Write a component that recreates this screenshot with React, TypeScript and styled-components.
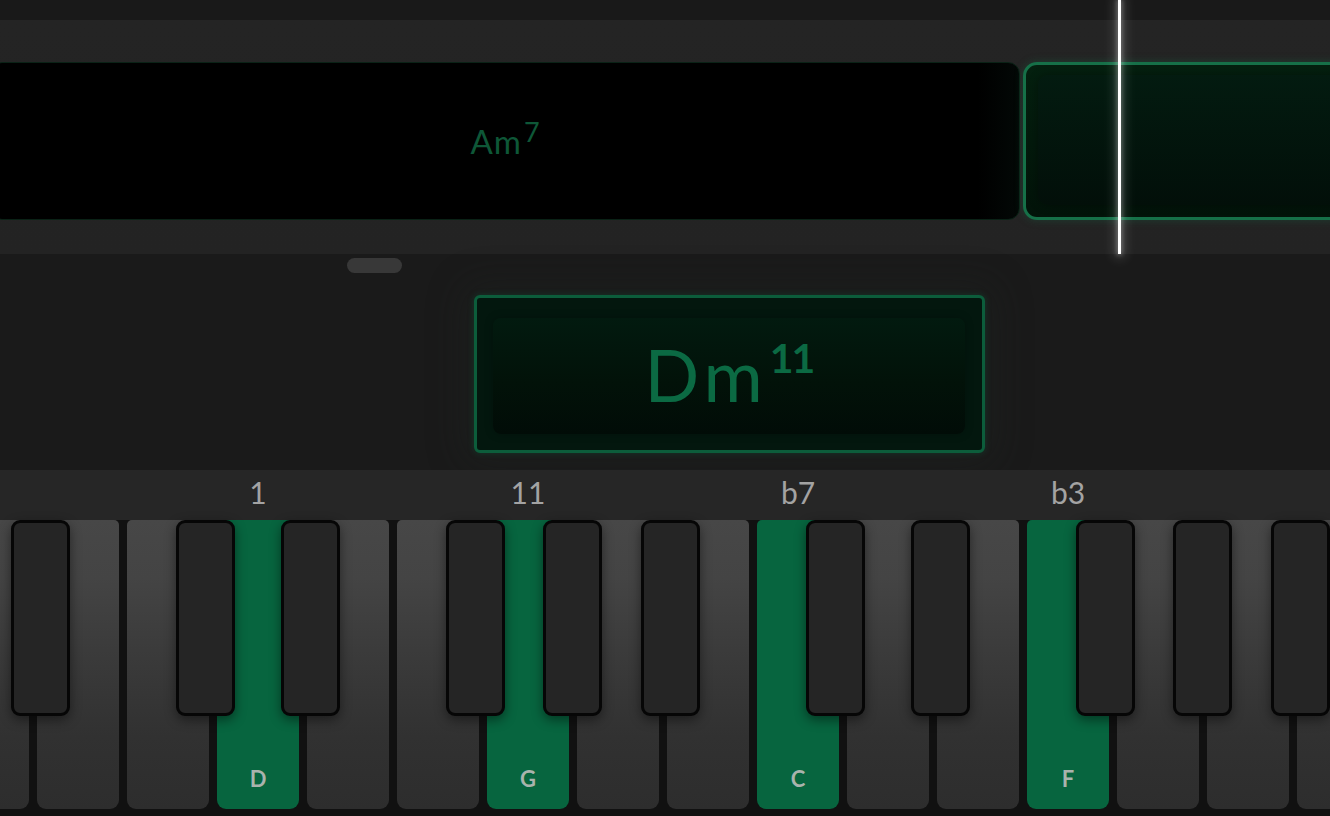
import React from "react";
import styled, { createGlobalStyle } from "styled-components";

const Global = createGlobalStyle`
  html, body { margin: 0; padding: 0; background: #1a1a1a; overflow: hidden; }
  * { box-sizing: border-box; }
`;

const FONT = `"Lato", "Noto Sans", "Liberation Sans", sans-serif`;

const Page = styled.div`
  position: relative;
  width: 1330px;
  height: 816px;
  overflow: hidden;
  display: flex;
  flex-direction: column;
  font-family: ${FONT};
`;

const TopStrip = styled.div`
  flex: 0 0 20px;
  background: #191919;
`;

const Lane = styled.div`
  flex: 0 0 234px;
  background: linear-gradient(180deg, #242424 0%, #232323 100%);
  display: flex;
  align-items: flex-start;
  gap: 3px;
  padding-top: 42px;
`;

const ChordBlock = styled.div<{ $active?: boolean; $width: number; $offset?: number }>`
  flex: 0 0 ${(p) => p.$width}px;
  margin-left: ${(p) => p.$offset ?? 0}px;
  height: 158px;
  border-radius: ${(p) => (p.$active ? 14 : 12)}px;
  border: ${(p) => (p.$active ? "3px solid #167048" : "1px solid #0a2216")};
  background: ${(p) =>
    p.$active
      ? "linear-gradient(180deg, #04200f 0%, #021309 100%)"
      : "linear-gradient(90deg, #000 0%, #000 96%, #030806 100%)"};
  box-shadow: ${(p) => (p.$active ? "0 0 8px rgba(22,112,72,0.35)" : "none")};
  display: flex;
  align-items: stretch;
  padding: ${(p) => (p.$active ? "10px 12px 12px 12px" : "0")};
`;

const ChordInner = styled.div`
  flex: 1;
  border-radius: 10px;
  background: linear-gradient(180deg, #031b10 0%, #020f09 100%);
  box-shadow: 0 0 10px rgba(0, 0, 0, 0.35);
`;

const ChordName = styled.div<{ $size: number; $color: string; $spacing?: number }>`
  flex: 1;
  display: flex;
  align-items: center;
  justify-content: center;
  color: ${(p) => p.$color};
  font-size: ${(p) => p.$size}px;
  letter-spacing: ${(p) => p.$spacing ?? 0}px;
  font-weight: 400;
  line-height: 1;
`;

const Root = styled.span``;

const Sup = styled.span<{ $size: number; $lift: number; $spacing?: number; $weight?: number }>`
  display: inline-block;
  font-size: ${(p) => p.$size}px;
  font-weight: ${(p) => p.$weight ?? 700};
  position: relative;
  top: -${(p) => p.$lift}px;
  letter-spacing: ${(p) => p.$spacing ?? 0}px;
  margin-left: 2px;
`;

const Playhead = styled.div`
  position: absolute;
  left: 1118px;
  top: 0;
  width: 3px;
  height: 254px;
  background: #ffffff;
  box-shadow: 0 0 5px 1px rgba(255, 255, 255, 0.35), 0 0 12px 5px rgba(255, 255, 255, 0.12);
`;

const Panel = styled.div`
  flex: 0 0 216px;
  background: #1a1a1a;
  display: flex;
  flex-direction: column;
  align-items: flex-start;
`;

const Handle = styled.div`
  margin: 4px 0 0 347px;
  width: 55px;
  height: 15px;
  border-radius: 8px;
  background: #383838;
`;

const Display = styled.div`
  margin: 22px 0 0 474px;
  width: 511px;
  height: 158px;
  border: 3px solid #0c5d3b;
  border-radius: 6px;
  background: #03170e;
  padding: 20px 17px 16px 16px;
  display: flex;
  box-shadow: 0 0 6px rgba(12, 110, 68, 0.35), 0 0 36px 12px rgba(34, 40, 37, 0.28);
`;

const DisplayInner = styled.div`
  flex: 1;
  display: flex;
  border-radius: 8px;
  background: linear-gradient(180deg, #021a0f 0%, #021209 55%, #010c07 100%);
  box-shadow: 0 0 8px rgba(0, 0, 0, 0.25);
  padding-bottom: 4px;
`;

const IntervalRow = styled.div`
  flex: 0 0 50px;
  background: #262626;
  display: flex;
  gap: 8px;
  margin-left: -53px;
  width: calc(100% + 53px);
`;

const IntervalCell = styled.div`
  flex: 0 0 82px;
  display: flex;
  align-items: center;
  justify-content: center;
  color: #a3a3a3;
  font-size: 30px;
  font-weight: 400;
  padding-bottom: 7px;
`;

const KeyboardArea = styled.div`
  flex: 0 0 296px;
  background: #111111;
  padding-bottom: 7px;
  display: flex;
`;

const Keys = styled.div`
  position: relative;
  margin-left: -53px;
  display: flex;
  gap: 8px;
  flex: 1;
  background: #111111;
`;

const WhiteKey = styled.div<{ $on?: boolean }>`
  flex: 0 0 82px;
  border-radius: 5px 5px 9px 9px;
  background: ${(p) =>
    p.$on
      ? "#07653f"
      : "linear-gradient(180deg, #474747 0%, #444444 20%, #3b3b3b 45%, #313131 75%, #2d2d2d 100%)"};
  display: flex;
  align-items: flex-end;
  justify-content: center;
  padding-bottom: 19px;
`;

const KeyLetter = styled.span`
  color: #a9b3ad;
  font-size: 22px;
  font-weight: 700;
  line-height: 1;
`;

const BlackKey = styled.div`
  position: absolute;
  top: 0;
  width: 59px;
  height: 196px;
  border: 3px solid #060606;
  border-radius: 9px;
  background: #252525;
  box-shadow: 0 4px 12px rgba(0, 0, 0, 0.45);
`;

type WK = { note: string; interval?: string };

const whiteKeys: WK[] = [
  { note: "A" },
  { note: "B" },
  { note: "C" },
  { note: "D", interval: "1" },
  { note: "E" },
  { note: "F" },
  { note: "G", interval: "11" },
  { note: "A" },
  { note: "B" },
  { note: "C", interval: "b7" },
  { note: "D" },
  { note: "E" },
  { note: "F", interval: "b3" },
  { note: "G" },
  { note: "A" },
  { note: "B" },
];

const blackKeyX = [11, 176, 281, 446, 543, 641, 806, 911, 1076, 1173, 1271];

export default function App() {
  return (
    <>
      <Global />
      <Page>
        <TopStrip />
        <Lane>
          <ChordBlock $width={1030} $offset={-10}>
            <ChordName $size={33} $color="#0e5737" $spacing={1}>
              <Root>Am</Root>
              <Sup $size={27} $lift={10} $weight={400}>7</Sup>
            </ChordName>
          </ChordBlock>
          <ChordBlock $active $width={400}>
            <ChordInner />
          </ChordBlock>
        </Lane>
        <Panel>
          <Handle />
          <Display>
            <DisplayInner>
              <ChordName $size={72} $color="#0b6a43" $spacing={5}>
                <Root>Dm</Root>
                <Sup $size={41} $lift={17} $spacing={-2}>
                  11
                </Sup>
              </ChordName>
            </DisplayInner>
          </Display>
        </Panel>
        <IntervalRow>
          {whiteKeys.map((k, i) => (
            <IntervalCell key={i}>{k.interval ?? ""}</IntervalCell>
          ))}
        </IntervalRow>
        <KeyboardArea>
          <Keys>
            {whiteKeys.map((k, i) => (
              <WhiteKey key={i} $on={!!k.interval}>
                {k.interval ? <KeyLetter>{k.note}</KeyLetter> : null}
              </WhiteKey>
            ))}
            {blackKeyX.map((x) => (
              <BlackKey key={x} style={{ left: x + 53 }} />
            ))}
          </Keys>
        </KeyboardArea>
        <Playhead />
      </Page>
    </>
  );
}
